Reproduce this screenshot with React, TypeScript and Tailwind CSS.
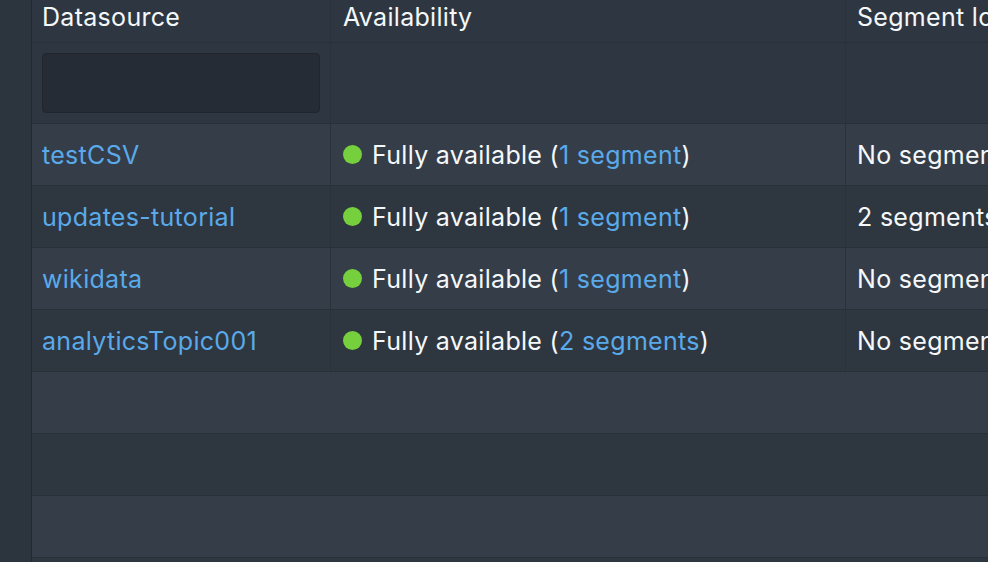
import { ReactNode } from 'react';

const rows = [
  { name: 'testCSV', segs: '1 segment', loaded: 'No segments to load/drop' },
  { name: 'updates-tutorial', segs: '1 segment', loaded: '2 segments to drop' },
  { name: 'wikidata', segs: '1 segment', loaded: 'No segments to load/drop' },
  { name: 'analyticsTopic001', segs: '2 segments', loaded: 'No segments to load/drop' },
];

// column widths and paddings
const cols = [
  'w-[299px] px-[10px] border-r border-[#2a313a]',
  'w-[515px] px-[12px] border-r border-[#2a313a]',
  'w-[400px] px-[11px]',
];

function Cell({ children, col }: { children?: ReactNode; col: number }) {
  return <div className={`${cols[col]} shrink-0 flex items-center`}>{children}</div>;
}

export default function App() {
  return (
    <div
      className="w-[988px] h-[562px] overflow-hidden flex bg-[#2c343e] text-[#f5f8fa] text-[25px] leading-[30px] tracking-[0.3px]"
      style={{ fontFamily: 'Inter, "Noto Sans", sans-serif' }}
    >
      <div className="w-[32px] shrink-0 bg-[#2c343e] border-r border-[#232930]" />
      <div className="flex-1 flex flex-col min-w-0">
        <div className="h-[43px] shrink-0 flex bg-[#2e3741] border-b border-[#29303a]">
          {['Datasource', 'Availability', 'Segment load/drop'].map((label, i) => (
            <div key={label} className={`${cols[i]} shrink-0 pt-[2px] whitespace-nowrap`}>
              {label}
            </div>
          ))}
        </div>
        <div className="h-[81px] shrink-0 flex bg-[#2e3741] border-b border-[#29303a]">
          <div className="w-[299px] shrink-0 px-[10px] flex items-center border-r border-[#2b323b]">
            <div className="w-[278px] h-[60px] rounded-[4px] bg-[#252c35] border border-[#20262d]" />
          </div>
          <div className="w-[515px] shrink-0 border-r border-[#2b323b]" />
          <div className="flex-1" />
        </div>
        {Array.from({ length: 8 }).map((_, i) => {
          const r = rows[i];
          return (
            <div
              key={i}
              className={`h-[62px] shrink-0 flex border-b border-[#29303a] ${i % 2 === 0 ? 'bg-[#343d48]' : 'bg-[#2e3640]'}`}
            >
              {r ? (
                <>
                  <Cell col={0}>
                    <span className="text-[#5aaaea] whitespace-nowrap">{r.name}</span>
                  </Cell>
                  <Cell col={1}>
                    <span className="w-[19px] h-[19px] rounded-full bg-[#76cf3c] mr-[10px] shrink-0" />
                    <span className="whitespace-nowrap">
                      Fully available (<span className="text-[#5aaaea]">{r.segs}</span>)
                    </span>
                  </Cell>
                  <Cell col={2}>
                    <span className="whitespace-nowrap">{r.loaded}</span>
                  </Cell>
                </>
              ) : null}
            </div>
          );
        })}
      </div>
    </div>
  );
}
